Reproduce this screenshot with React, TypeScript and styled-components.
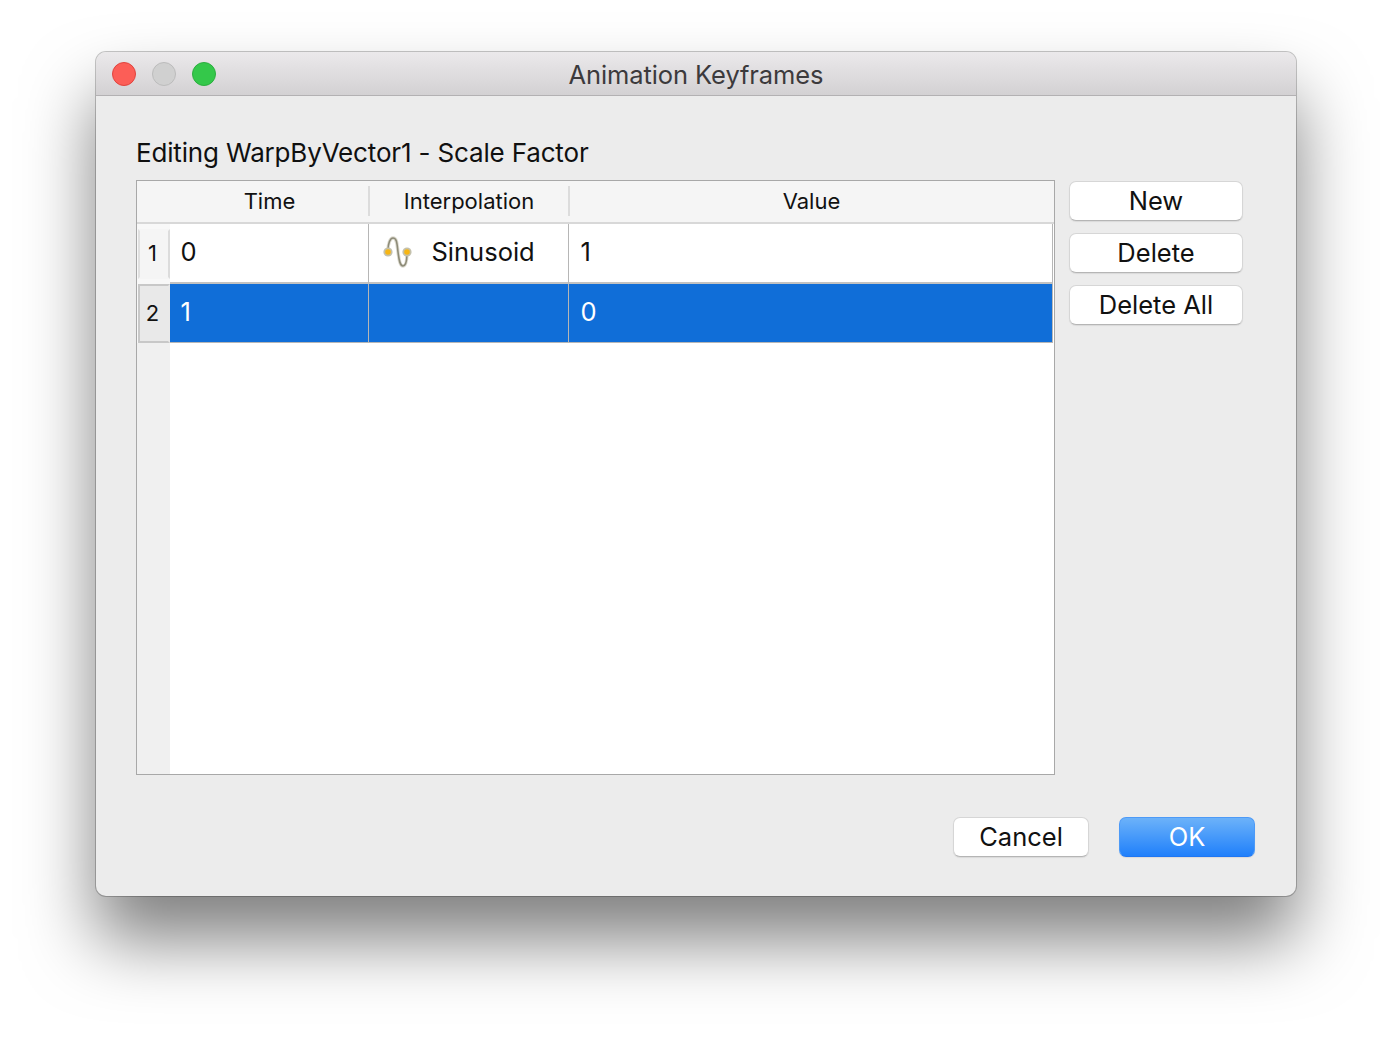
import React from 'react';
import styled, { createGlobalStyle } from 'styled-components';

const GlobalStyle = createGlobalStyle`
  html, body {
    margin: 0;
    padding: 0;
    background: #ffffff;
    font-family: Inter, "Liberation Sans", sans-serif;
  }
`;

const Page = styled.div`
  width: 1391px;
  height: 1043px;
  padding: 52px 0 0 96px;
  box-sizing: border-box;
  overflow: hidden;
`;

const Window = styled.div`
  width: 1200px;
  height: 844px;
  box-sizing: border-box;
  display: flex;
  flex-direction: column;
  border-radius: 10px;
  background: #ececec;
  box-shadow: 0 0 0 1px rgba(0, 0, 0, 0.22), 0 44px 70px rgba(0, 0, 0, 0.5);
`;

const TitleBar = styled.div`
  height: 44px;
  flex: none;
  box-sizing: border-box;
  display: grid;
  grid-template-columns: 1fr auto 1fr;
  align-items: center;
  padding: 0 16px;
  border-radius: 10px 10px 0 0;
  background: linear-gradient(#ebe9eb, #d3d1d3);
  border-bottom: 1px solid #b3b1b3;
`;

const Lights = styled.div`
  display: flex;
  gap: 16px;
`;

const Light = styled.span<{ $fill: string; $edge: string }>`
  width: 24px;
  height: 24px;
  box-sizing: border-box;
  border-radius: 50%;
  background: ${(p) => p.$fill};
  border: 1px solid ${(p) => p.$edge};
`;

const WindowTitle = styled.div`
  font-size: 25.5px;
  letter-spacing: -0.1px;
  color: #3c3a3c;
  line-height: 40px;
  padding-top: 2px;
`;

const Body = styled.div`
  flex: 1;
  display: flex;
  flex-direction: column;
  padding: 0 41px 39px 40px;
`;

const Heading = styled.div`
  margin-top: 41px;
  height: 32px;
  margin-bottom: 11px;
  line-height: 32px;
  font-size: 26px;
  letter-spacing: -0.16px;
  color: #101010;
`;

const TableArea = styled.div`
  display: flex;
  gap: 14px;
  align-items: flex-start;
`;

const Table = styled.div`
  width: 919px;
  height: 595px;
  box-sizing: border-box;
  border: 1px solid #a8a8a8;
  background: #ffffff;
  display: flex;
  flex-direction: column;
`;

const HeaderRow = styled.div`
  height: 43px;
  flex: none;
  box-sizing: border-box;
  display: grid;
  grid-template-columns: 33px 199px 200px 1fr;
  background: #f5f5f5;
  border-bottom: 2px solid #d8d8d8;
`;

const HeaderCell = styled.div<{ $divider?: boolean }>`
  display: flex;
  align-items: center;
  justify-content: center;
  padding-bottom: 2px;
  font-size: 22px;
  color: #111111;
  position: relative;

  &::after {
    content: '';
    display: ${(p) => (p.$divider ? 'block' : 'none')};
    position: absolute;
    right: -1px;
    top: 5px;
    bottom: 6px;
    width: 2px;
    background: #dcdcdc;
  }
`;

const Rows = styled.div`
  flex: 1;
  display: flex;
  flex-direction: column;
  background: linear-gradient(to right, #f0f0f0 33px, #ffffff 33px);
`;

const Row = styled.div<{ $selected?: boolean }>`
  width: 916px;
  height: ${(p) => (p.$selected ? 59 : 60)}px;
  flex: none;
  display: grid;
  grid-template-columns: 33px 199px 200px 484px;
  background: ${(p) => (p.$selected ? '#106ed8' : '#ffffff')};
  color: ${(p) => (p.$selected ? '#ffffff' : '#111111')};
`;

const RowHeaderSlot = styled.div`
  display: flex;
  align-items: center;
  background: #f8f8f8;
  padding-left: 1px;
`;

const RowHeader = styled.div<{ $selected?: boolean }>`
  flex: 1;
  height: ${(p) => (p.$selected ? '100%' : '50px')};
  display: flex;
  align-items: center;
  justify-content: center;
  box-sizing: border-box;
  font-size: 22px;
  color: #111111;
  padding: 0 3px 2px 0;
  background: ${(p) => (p.$selected ? '#e9e9e9' : '#f5f5f5')};
  border: 2px solid ${(p) => (p.$selected ? '#c8c8c8' : '#f5f5f5')};
  border-left-color: ${(p) => (p.$selected ? '#c8c8c8' : '#e0e0e0')};
  border-right-color: ${(p) => (p.$selected ? '#e9e9e9' : '#dcdcdc')};
`;

const Cell = styled.div<{ $selected?: boolean }>`
  display: flex;
  align-items: center;
  gap: 19px;
  padding: 0 0 3px 10.5px;
  font-size: 25.5px;
  box-sizing: border-box;
  border-right: 1px solid #b6b6b6;
  border-bottom: ${(p) => (p.$selected ? '1px solid #b6b6b6' : '2px solid #c2c2c2')};

  &:last-child {
    padding-left: 11.5px;
  }
`;

const SideButtons = styled.div`
  display: flex;
  flex-direction: column;
  gap: 12px;
  padding-top: 1px;
`;

const Button = styled.button<{ $width: number }>`
  width: ${(p) => p.$width}px;
  height: 40px;
  box-sizing: border-box;
  border-radius: 7px;
  border: 1px solid #d6d6d6;
  border-bottom-color: #b5b5b5;
  background: #ffffff;
  box-shadow: 0 1px 1px rgba(0, 0, 0, 0.08);
  font-family: inherit;
  font-size: 25.5px;
  color: #111111;
  padding: 0 0 2px;
`;

const PrimaryButton = styled(Button)`
  border: 1px solid #4d9af7;
  border-bottom-color: #1f76f2;
  background: linear-gradient(#6cb2f9, #2080fb);
  color: #ffffff;
`;

const Footer = styled.div`
  display: flex;
  justify-content: flex-end;
  gap: 30px;
  margin-top: 42px;
`;

const IconSvg = styled.svg`
  flex: none;
  margin-left: 3px;
`;

// row 1 interpolation glyph
const SinusoidIcon = () => {
  const wave = 'M5 14 C5 8 7 2 10 2 C14 2 14 8 15 16 C16 24 17 30 20 30 C23 30 24 24 24 16';
  return (
    <IconSvg width="30" height="32" viewBox="0 0 30 32">
      <path d={wave} fill="none" stroke="#dedcd2" strokeWidth="3.4" />
      <path d={wave} fill="none" stroke="#8d8b78" strokeWidth="1.6" />
      <circle cx="5" cy="16" r="4.6" fill="#c4c1ac" />
      <circle cx="24" cy="16" r="4.6" fill="#c4c1ac" />
      <circle cx="5" cy="16" r="2.8" fill="#f7b614" />
      <circle cx="24" cy="16" r="2.8" fill="#f7b614" />
    </IconSvg>
  );
};

const App: React.FC = () => (
  <Page>
    <GlobalStyle />
    <Window>
      <TitleBar>
        <Lights>
          <Light $fill="#fc5e57" $edge="#e0443e" />
          <Light $fill="#d0d0d0" $edge="#bcbcbc" />
          <Light $fill="#34c84a" $edge="#2cae3f" />
        </Lights>
        <WindowTitle>Animation Keyframes</WindowTitle>
      </TitleBar>
      <Body>
        <Heading>Editing WarpByVector1 - Scale Factor</Heading>
        <TableArea>
          <Table>
            <HeaderRow>
              <HeaderCell />
              <HeaderCell $divider>Time</HeaderCell>
              <HeaderCell $divider>Interpolation</HeaderCell>
              <HeaderCell>Value</HeaderCell>
            </HeaderRow>
            <Rows>
              <Row>
                <RowHeaderSlot>
                  <RowHeader>1</RowHeader>
                </RowHeaderSlot>
                <Cell>0</Cell>
                <Cell>
                  <SinusoidIcon />
                  Sinusoid
                </Cell>
                <Cell>1</Cell>
              </Row>
              <Row $selected>
                <RowHeaderSlot>
                  <RowHeader $selected>2</RowHeader>
                </RowHeaderSlot>
                <Cell $selected>1</Cell>
                <Cell $selected />
                <Cell $selected>0</Cell>
              </Row>
            </Rows>
          </Table>
          <SideButtons>
            <Button $width={174}>New</Button>
            <Button $width={174}>Delete</Button>
            <Button $width={174}>Delete All</Button>
          </SideButtons>
        </TableArea>
        <Footer>
          <Button $width={136}>Cancel</Button>
          <PrimaryButton $width={136}>OK</PrimaryButton>
        </Footer>
      </Body>
    </Window>
  </Page>
);

export default App;
